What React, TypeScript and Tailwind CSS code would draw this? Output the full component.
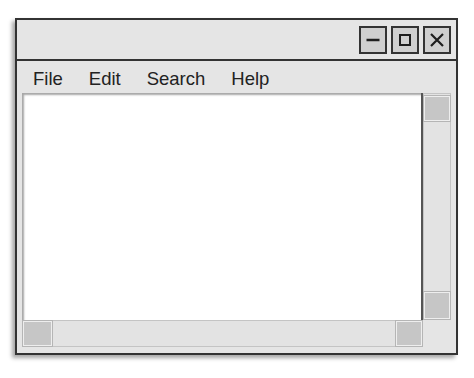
const menus = ['File', 'Edit', 'Search', 'Help']

function ScrollButton() {
  return <div className="h-full w-full border border-[#eeeeee] bg-[#c6c6c6] shadow-[0_0_0_1px_#b5b5b5]" />
}

function TitleButton({ children }: { children: React.ReactNode }) {
  return (
    <button className="flex h-7 w-7 items-center justify-center border-2 border-[#333333] bg-[#cfcfcf] text-[#1e1e1e]">
      {children}
    </button>
  )
}

export default function App() {
  return (
    <div className="h-[378px] w-[474px] bg-white pl-[15px] pt-[18px]" style={{ fontFamily: '"Liberation Sans", Arial, sans-serif' }}>
      <div className="flex h-[337px] w-[443px] flex-col border-2 border-[#333333] bg-[#e5e5e5] shadow-[-3px_3px_4px_rgba(0,0,0,0.35)]">

        {/* Title bar */}
        <div className="flex h-[41px] items-center justify-end gap-1 border-b-2 border-[#333333] pr-[5px]">
          <TitleButton>
            <svg width="14" height="14" viewBox="0 0 14 14">
              <line x1="0.5" y1="7" x2="13.5" y2="7" stroke="currentColor" strokeWidth="2.5" />
            </svg>
          </TitleButton>
          <TitleButton>
            <svg width="12" height="12" viewBox="0 0 12 12">
              <rect x="1" y="1" width="10" height="10" fill="none" stroke="currentColor" strokeWidth="2" />
            </svg>
          </TitleButton>
          <TitleButton>
            <svg width="14" height="14" viewBox="0 0 14 14">
              <path d="M1 1L13 13M13 1L1 13" stroke="currentColor" strokeWidth="2.2" />
            </svg>
          </TitleButton>
        </div>

        {/* Menu bar */}
        <div className="flex h-[32px] items-center gap-[26px] pl-[16px] pt-[4px] text-[18.5px] text-[#222]">
          {menus.map((m) => (
            <span key={m}>{m}</span>
          ))}
        </div>

        {/* Client area */}
        <div className="grid flex-1 grid-cols-[1fr_28px] grid-rows-[1fr_27px] pb-[6px] pl-[5px] pr-[5px]">
          <div className="border-r-2 border-[#555555] bg-white shadow-[inset_2px_2px_2px_rgba(0,0,0,0.35)]" />

          {/* Vertical scrollbar */}
          <div className="flex flex-col border border-[#c4c4c4] bg-[#e3e3e3] pt-[2px]">
            <div className="h-[25px]"><ScrollButton /></div>
            <div className="flex-1" />
            <div className="h-[27px]"><ScrollButton /></div>
          </div>

          {/* Horizontal scrollbar */}
          <div className="flex border border-[#c4c4c4] bg-[#e3e3e3]">
            <div className="w-[29px]"><ScrollButton /></div>
            <div className="flex-1" />
            <div className="w-[26px]"><ScrollButton /></div>
          </div>
          <div />
        </div>
      </div>
    </div>
  )
}
